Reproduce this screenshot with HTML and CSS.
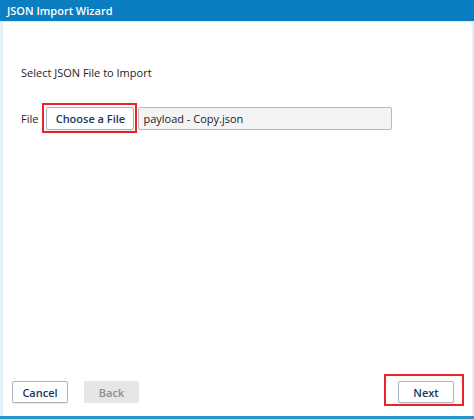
FILE: index.html
```html
<!DOCTYPE html>
<html>
<head>
<meta charset="utf-8">
<link rel="stylesheet" href="styles.css">
</head>
<body>
<div class="wizard">
  <div class="titlebar">JSON Import Wizard</div>
  <div class="body">
    <div class="content">
      <div class="heading">Select JSON File to Import</div>
      <div class="file-row">
        <span class="label">File</span>
        <span class="highlight choose-hl"><button class="btn choose">Choose a File</button></span>
        <div class="filename">payload - Copy.json</div>
      </div>
    </div>
    <div class="footer">
      <button class="btn cancel">Cancel</button>
      <button class="btn back">Back</button>
      <span class="spacer"></span>
      <span class="highlight next-hl"><button class="btn next">Next</button></span>
    </div>
  </div>
</div>
</body>
</html>
```
FILE: styles.css
```css
html, body {
  margin: 0;
  padding: 0;
  background: #ffffff;
}
.wizard {
  width: 474px;
  height: 419px;
  display: flex;
  flex-direction: column;
  font-family: "Open Sans", "Noto Sans", sans-serif;
  color: #222;
  box-sizing: border-box;
  border-bottom: 3px solid #2a93c9;
}
.titlebar {
  height: 21px;
  background: #0a7ec0;
  color: #ffffff;
  font-weight: 600;
  font-size: 11px;
  line-height: 21px;
  padding-left: 7px;
  border-bottom: 1px solid #d3e8f4;
}
.body {
  flex: 1;
  display: flex;
  flex-direction: column;
  border-left: 3px solid #e3f0f7;
  border-right: 2px solid #e3f0f7;
  background: #fff;
}
.content {
  flex: 1;
  padding: 43px 0 0 18px;
}
.heading {
  font-size: 11px;
  line-height: 16px;
}
.file-row {
  display: flex;
  align-items: center;
  margin-top: 22px;
}
.label {
  font-size: 11px;
  margin-right: 4px;
}
.highlight {
  display: inline-flex;
  align-items: flex-start;
  border: 2px solid #e8232a;
  box-sizing: border-box;
}
.choose-hl {
  padding: 2px 1px 1px 2px;
  height: 30px;
}
.btn {
  font-family: "Open Sans", "Noto Sans", sans-serif;
  font-size: 11px;
  font-weight: 600;
  color: #16395a;
  background: #ffffff;
  border: 1px solid #a9b4bd;
  border-radius: 2px;
  height: 23px;
  padding: 0;
  box-shadow: 0 1px 1px rgba(0,0,0,0.08);
}
.choose {
  width: 88px;
}
.filename {
  margin-left: 1px;
  width: 254px;
  height: 23px;
  box-sizing: border-box;
  border: 1px solid #b9b9b9;
  border-radius: 2px;
  background: #f4f4f4;
  font-size: 11px;
  line-height: 21px;
  padding-left: 4px;
  color: #222;
}
.footer {
  display: flex;
  align-items: flex-end;
  padding: 0 8px 13px 9px;
}
.cancel {
  width: 56px;
  height: 22px;
}
.back {
  margin-left: 16px;
  width: 55px;
  height: 22px;
  background: #e6e6e6;
  border-color: #e6e6e6;
  color: #8e8e8e;
  box-shadow: none;
}
.spacer {
  flex: 1;
}
.next-hl {
  padding: 5px 8px 1px 12px;
  height: 32px;
  margin-bottom: -3px;
}
.next {
  width: 56px;
  height: 22px;
}
```
